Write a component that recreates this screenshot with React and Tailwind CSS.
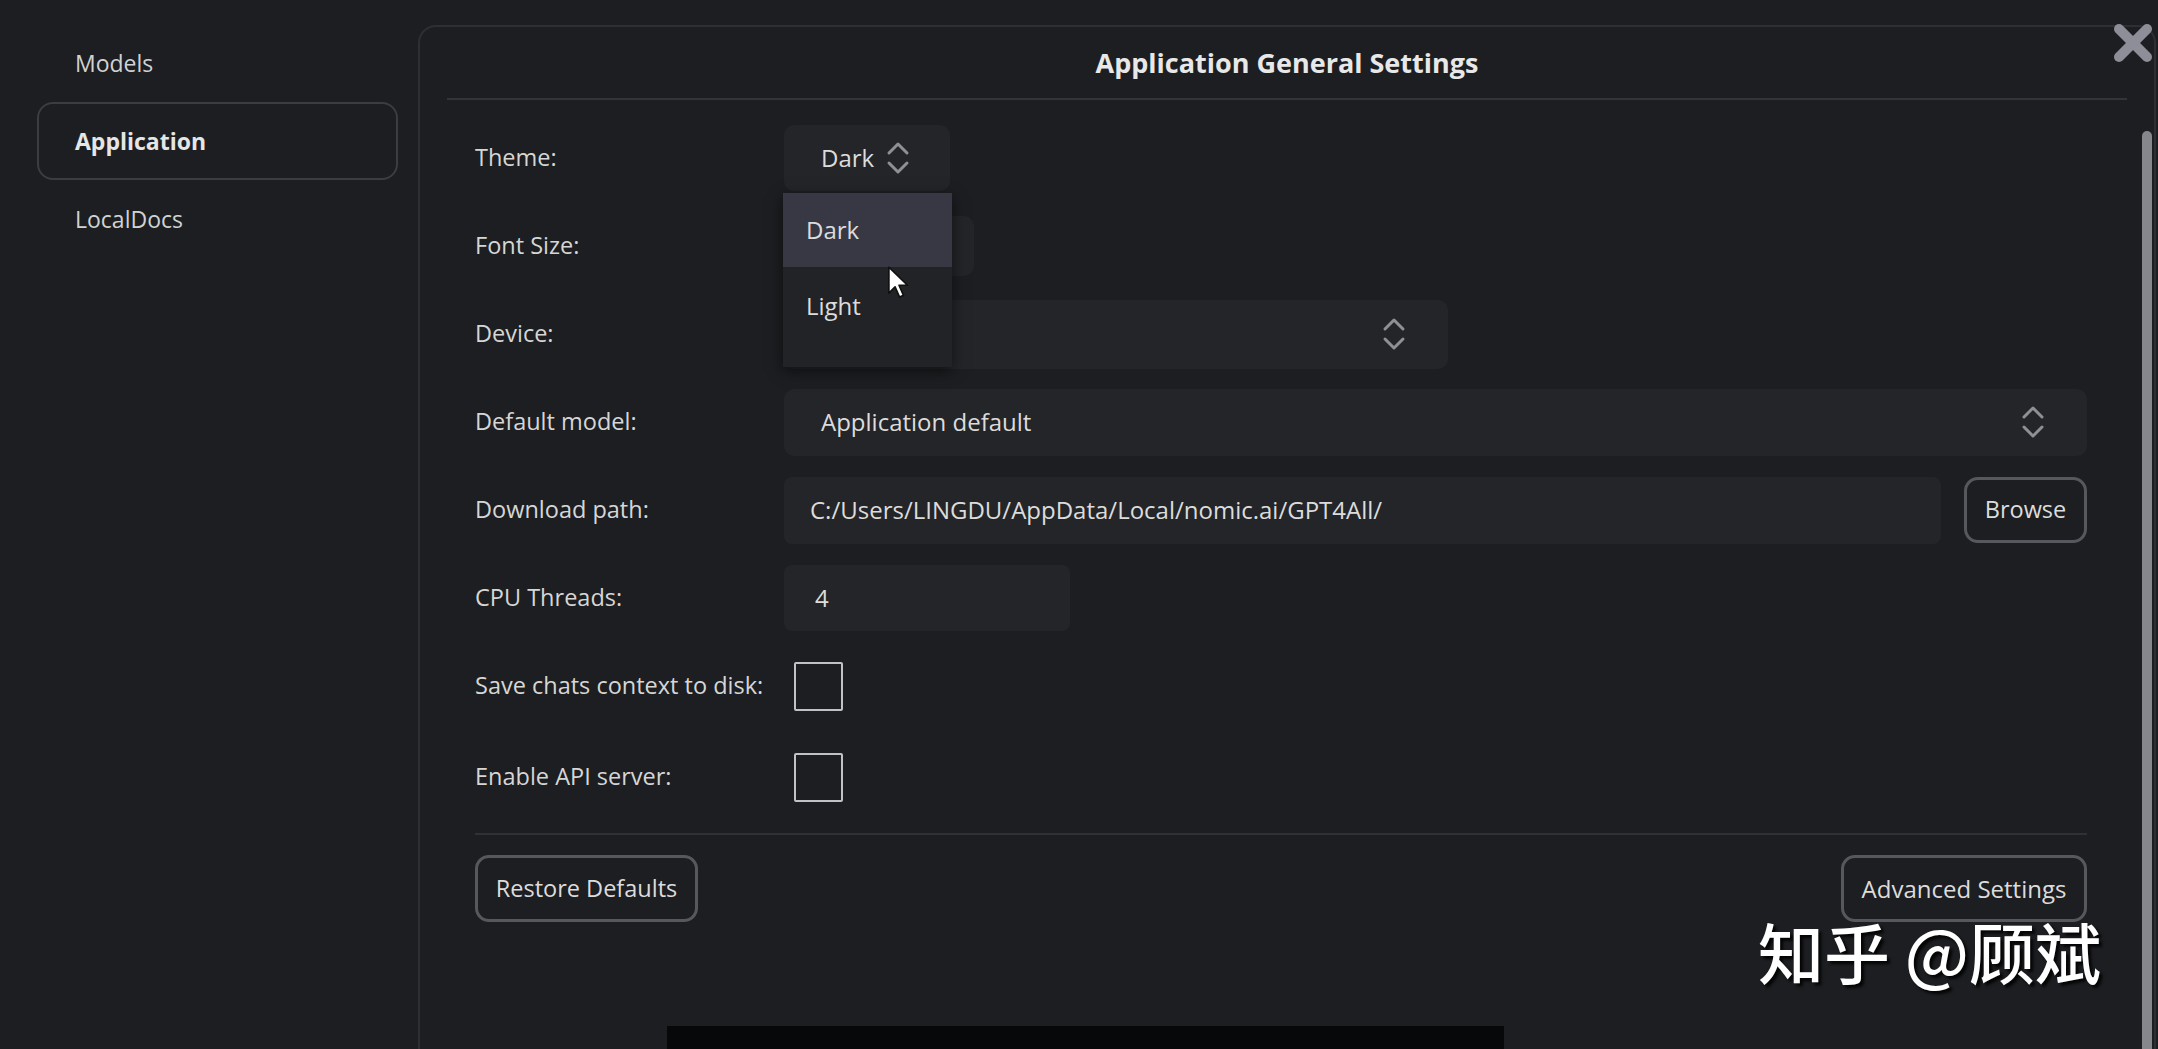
import React from "react";

function UpDown({ className = "" }) {
  return (
    <svg width="24" height="36" viewBox="0 0 24 36" className={className} fill="none" stroke="#8f9095" strokeWidth="3" strokeLinecap="round" strokeLinejoin="round">
      <path d="M3 13 L12 4 L21 13" />
      <path d="M3 23 L12 32 L21 23" />
    </svg>
  );
}

function Row({ label, children, h = "h-[88px]" }) {
  return (
    <div className={`flex items-center shrink-0 ${h}`}>
      <div className="w-[309px] shrink-0 text-[23.5px] text-[#d6d6d6]">{label}</div>
      <div className="flex-1 flex items-center">{children}</div>
    </div>
  );
}

export default function App() {
  return (
    <div className="relative w-[2158px] h-[1049px] overflow-hidden bg-[#1c1e21] flex font-['Open_Sans',sans-serif] text-[#d6d6d6]">
      {/* Sidebar */}
      <div className="w-[418px] shrink-0 pt-[24px] pl-[37px] pr-[20px]">
        <div className="h-[78px] w-[361px] flex items-center pl-[38px] text-[23px] text-[#d2d2d2]">Models</div>
        <div className="h-[78px] w-[361px] flex items-center pl-[36px] text-[23px] font-bold text-[#e6e6e6] border-2 border-[#3a3d41] rounded-[16px]">Application</div>
        <div className="h-[78px] w-[361px] flex items-center pl-[38px] text-[23px] text-[#d2d2d2]">LocalDocs</div>
      </div>

      {/* Main panel */}
      <div className="relative mt-[25px] mr-[2px] flex-1 border-2 border-b-0 border-[#2c2f33] rounded-t-[18px]">
        <div className="h-[71px] pt-[1px] flex items-center justify-center text-[27px] font-bold text-[#e8e8e8]">Application General Settings</div>
        <div className="mx-[27px] h-[2px] bg-[#313438]" />

        <div className="pl-[55px] pr-[67px] pt-[14px]">
          <Row label="Theme:">
            <div className="relative w-[166px] h-[66px] bg-[#242528] rounded-[10px] flex items-center pl-[37px] text-[24px] text-[#dcdcdc]">
              <span>Dark</span>
              <UpDown className="ml-[12px]" />
            </div>
          </Row>
          <Row label="Font Size:">
            <div className="w-[190px] h-[60px] bg-[#242528] rounded-[10px]" />
          </Row>
          <Row label="Device:">
            <div className="w-[664px] h-[69px] bg-[#242528] rounded-[10px] flex items-center justify-end pr-[42px]">
              <UpDown />
            </div>
          </Row>
          <Row label="Default model:">
            <div className="flex-1 h-[67px] bg-[#242528] rounded-[10px] flex items-center pl-[37px] pr-[42px] text-[24px] text-[#dcdcdc]">
              <span className="flex-1">Application default</span>
              <UpDown />
            </div>
          </Row>
          <Row label="Download path:">
            <div className="flex-1 h-[67px] bg-[#242528] rounded-[8px] flex items-center pl-[26px] text-[24px] text-[#dcdcdc]">
              C:/Users/LINGDU/AppData/Local/nomic.ai/GPT4All/
            </div>
            <div className="ml-[23px] w-[123px] h-[66px] border-[3px] border-[#56585e] rounded-[14px] flex items-center justify-center text-[23.5px] text-[#dcdcdc]">Browse</div>
          </Row>
          <Row label="CPU Threads:">
            <div className="w-[286px] h-[66px] bg-[#242528] rounded-[8px] flex items-center pl-[31px] text-[24px] text-[#dcdcdc]">4</div>
          </Row>
          <Row label="Save chats context to disk:">
            <div className="ml-[10px] w-[49px] h-[49px] border-2 border-[#c2c2c4] rounded-[2px]" />
          </Row>
          <Row label="Enable API server:" h="h-[94px]">
            <div className="ml-[10px] w-[49px] h-[49px] border-2 border-[#c2c2c4] rounded-[2px]" />
          </Row>
          <div className="mt-[9px] h-[2px] bg-[#2e3135]" />
          <div className="mt-[20px] flex justify-between">
            <div className="w-[223px] h-[67px] border-[3px] border-[#56585e] rounded-[14px] flex items-center justify-center text-[23.5px] text-[#dcdcdc]">Restore Defaults</div>
            <div className="w-[246px] h-[67px] border-[3px] border-[#56585e] rounded-[14px] flex items-center justify-center text-[24px] text-[#dcdcdc]">Advanced Settings</div>
          </div>
          <div className="mt-[104px] ml-[192px] w-[837px] h-[30px] bg-[#07080a]" />
        </div>

        {/* scrollbar */}
        <div className="absolute right-[2px] top-[104px] w-[10px] h-[960px] bg-[#86878c] rounded-t-full" />
      </div>

      {/* Theme dropdown popup */}
      <div className="absolute left-[783px] top-[193px] w-[169px] h-[174px] bg-[#222326] shadow-[0_4px_14px_rgba(0,0,0,0.55)] flex flex-col text-[24px] text-[#dcdcdc]">
        <div className="h-[74px] bg-[#383845] flex items-center pl-[23px]">Dark</div>
        <div className="h-[78px] flex items-center pl-[23px]">Light</div>
      </div>

      {/* Cursor */}
      <svg className="absolute left-[886px] top-[265px]" width="26" height="36" viewBox="0 0 22 32">
        <path d="M2 2 L2 25 L7.5 19.5 L11.5 28.5 L15 27 L11 18 L18.5 18 Z" fill="#ffffff" stroke="#111" strokeWidth="1.5" strokeLinejoin="round" />
      </svg>

      {/* Close X */}
      <svg className="absolute left-[2112px] top-[22px]" width="42" height="42" viewBox="0 0 42 42" fill="none" stroke="#8e8e99" strokeWidth="10" strokeLinecap="round">
        <path d="M7 7 L35 35" />
        <path d="M35 7 L7 35" />
      </svg>

      {/* Watermark */}
      <div className="absolute left-[1758px] top-[917px] text-[66px] leading-none font-medium text-white font-['Noto_Sans_CJK_SC',sans-serif] [text-shadow:3px_3px_3px_rgba(0,0,0,0.85)] whitespace-nowrap">
        知乎 @顾斌
      </div>
    </div>
  );
}
